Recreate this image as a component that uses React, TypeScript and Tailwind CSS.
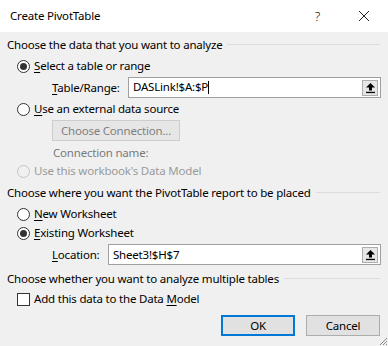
import React from "react";

const font = { fontFamily: '"Noto Sans", "Segoe UI", sans-serif' };

function Radio({ checked, disabled }: { checked?: boolean; disabled?: boolean }) {
  return (
    <span
      className={
        "w-[13px] h-[13px] rounded-full border flex items-center justify-center shrink-0 " +
        (disabled ? "border-[#c4c4c4] bg-[#f0f0f0]" : "border-[#333333] bg-white")
      }
    >
      {checked && <span className="w-[7px] h-[7px] rounded-full bg-[#333333]" />}
    </span>
  );
}

function U({ children }: { children: React.ReactNode }) {
  return <span className="underline underline-offset-2 decoration-1">{children}</span>;
}

function UpArrow() {
  return (
    <span className="w-[16px] h-[16px] border border-[#adadad] bg-[#e6e6e6] flex items-center justify-center mr-[2px]">
      <svg width="11" height="12" viewBox="0 0 11 12">
        <path d="M5.5 1 L10 5.5 L7 5.5 L7 8.5 L4 8.5 L4 5.5 L1 5.5 Z" fill="#000" />
        <rect x="1" y="9.8" width="9" height="1.3" fill="#000" />
      </svg>
    </span>
  );
}

function Header({ text }: { text: string }) {
  return (
    <div className="flex items-center h-[18px] pr-[8px]">
      <span className="whitespace-nowrap">{text}</span>
      <span className="flex-1 h-px bg-[#dcdcdc] ml-[5px] -mt-[2px]" />
    </div>
  );
}

export default function App() {
  return (
    <div className="w-[388px] h-[346px] bg-[#f0f0f0] text-[11.5px] tracking-[-0.2px] text-black relative overflow-hidden leading-none" style={font}>
      {/* Title bar */}
      <div className="h-[32px] bg-white flex items-center pl-[10px] pr-[18px]">
        <span className="text-[11.5px] flex-1">Create PivotTable</span>
        <span className="text-[13px] mr-[38px] font-light">?</span>
        <svg width="12" height="12" viewBox="0 0 12 12">
          <path d="M1 1 L11 11 M11 1 L1 11" stroke="#222" strokeWidth="1" />
        </svg>
      </div>

      <div className="pl-[7px]">
        <div className="mt-[4px]">
          <Header text="Choose the data that you want to analyze" />
        </div>
        <div className="flex items-center h-[18px] mt-[3px] pl-[10px] gap-[4px]">
          <Radio checked />
          <span><U>S</U>elect a table or range</span>
        </div>
        <div className="flex items-center h-[21px] mt-[2px]">
          <span className="pl-[45px] w-[121px] shrink-0"><U>T</U>able/Range:</span>
          <div className="w-[253px] h-[21px] bg-white border border-[#a0a0a0] flex items-center">
            <span className="pl-[4px] flex-1">DASLink!$A:$P<span className="inline-block w-px h-[13px] bg-black align-middle -mt-[2px]" /></span>
            <UpArrow />
          </div>
        </div>
        <div className="flex items-center h-[18px] mt-[2px] pl-[10px] gap-[4px]">
          <Radio />
          <span><U>U</U>se an external data source</span>
        </div>
        <div className="flex items-center h-[21px] mt-[2px] pl-[45px]">
          <div className="w-[128px] h-[21px] bg-[#e6e6e6] border border-[#cdcdcd] flex items-center justify-center text-[#7f7f7f]">
            Choose Connection...
          </div>
        </div>
        <div className="flex items-center h-[18px] mt-[3px] pl-[46px] text-[#7a7a7a]">Connection name:</div>
        <div className="flex items-center h-[18px] pl-[10px] gap-[4px] text-[#9a9a9a]">
          <Radio disabled />
          <span>Use this workbook's Data Model</span>
        </div>
        <div className="mt-[4px]">
          <Header text="Choose where you want the PivotTable report to be placed" />
        </div>
        <div className="flex items-center h-[18px] mt-[3px] pl-[10px] gap-[4px]">
          <Radio />
          <span><U>N</U>ew Worksheet</span>
        </div>
        <div className="flex items-center h-[18px] mt-[1px] pl-[10px] gap-[4px]">
          <Radio checked />
          <span><U>E</U>xisting Worksheet</span>
        </div>
        <div className="flex items-center h-[21px] mt-[2px]">
          <span className="pl-[45px] w-[101px] shrink-0"><U>L</U>ocation:</span>
          <div className="w-[273px] h-[21px] bg-white border border-[#a0a0a0] flex items-center">
            <span className="pl-[4px] flex-1">Sheet3!$H$7</span>
            <UpArrow />
          </div>
        </div>
        <div className="mt-[5px]">
          <Header text="Choose whether you want to analyze multiple tables" />
        </div>
        <div className="flex items-center h-[18px] mt-[2px] pl-[10px] gap-[4px]">
          <span className="w-[13px] h-[13px] border border-[#333333] bg-white shrink-0" />
          <span>Add this data to the Data <U>M</U>odel</span>
        </div>
        <div className="flex justify-end gap-[11px] mt-[7px] pr-[8px]">
          <div className="w-[74px] h-[21px] bg-[#e1e1e1] border-2 border-[#0078d7] flex items-center justify-center">OK</div>
          <div className="w-[74px] h-[21px] bg-[#e1e1e1] border border-[#adadad] flex items-center justify-center">Cancel</div>
        </div>
      </div>

      {/* resize grip */}
      <svg className="absolute right-0 bottom-0" width="12" height="12" viewBox="0 0 12 12">
        <path d="M11 4 L4 11 M11 7 L7 11 M11 10 L10 11" stroke="#8a8a8a" strokeWidth="1" />
      </svg>
    </div>
  );
}
